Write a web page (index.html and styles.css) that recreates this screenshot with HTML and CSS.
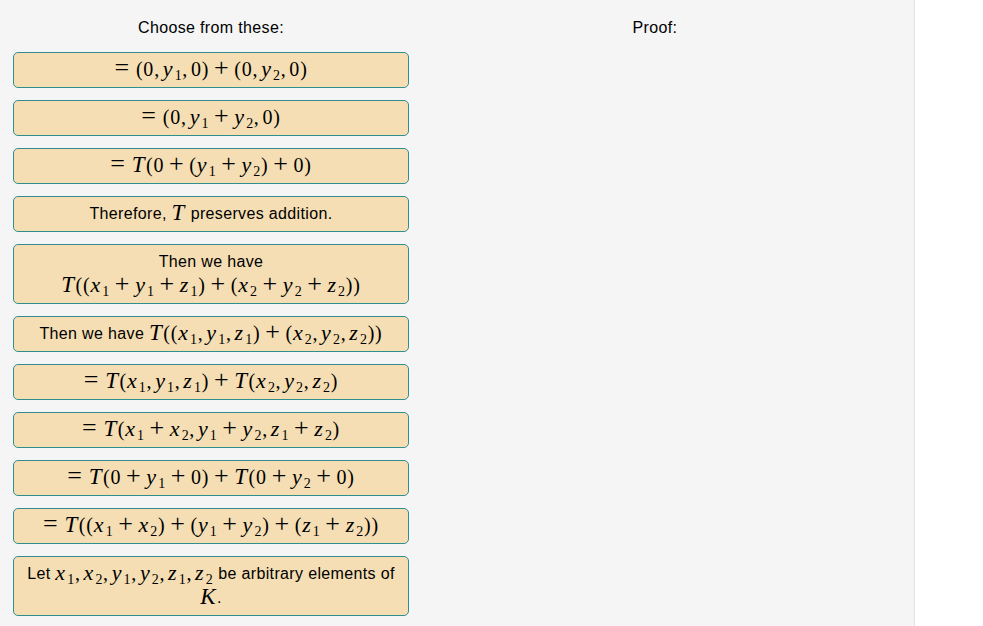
FILE: index.html
```html
<!DOCTYPE html>
<html lang="en">
<head>
    <meta charset="UTF-8">
    <meta name="viewport" content="width=device-width, initial-scale=1.0">
    <title>Proof builder</title>
    <link rel="stylesheet" href="styles.css">
</head>
<body>
    <div class="workspace">
        <!-- Choices -->
        <div class="column">
            <div class="heading">Choose from these:</div>
            <div class="card"><span class="m"><span class="rel">=</span>(0<span class="p">,</span><i>y</i><sub>1</sub><span class="p">,</span>0)<span class="op">+</span>(0<span class="p">,</span><i>y</i><sub>2</sub><span class="p">,</span>0)</span></div>
            <div class="card"><span class="m"><span class="rel">=</span>(0<span class="p">,</span><i>y</i><sub>1</sub><span class="op">+</span><i>y</i><sub>2</sub><span class="p">,</span>0)</span></div>
            <div class="card"><span class="m"><span class="rel">=</span><i class="cap">T</i>(0<span class="op">+</span>(<i>y</i><sub>1</sub><span class="op">+</span><i>y</i><sub>2</sub>)<span class="op">+</span>0)</span></div>
            <div class="card">Therefore, <span class="m"><i class="cap">T</i></span> preserves addition.</div>
            <div class="card">Then we have<br><span class="m"><i class="cap">T</i>((<i>x</i><sub>1</sub><span class="op">+</span><i>y</i><sub>1</sub><span class="op">+</span><i>z</i><sub>1</sub>)<span class="op">+</span>(<i>x</i><sub>2</sub><span class="op">+</span><i>y</i><sub>2</sub><span class="op">+</span><i>z</i><sub>2</sub>))</span></div>
            <div class="card">Then we have <span class="m"><i class="cap">T</i>((<i>x</i><sub>1</sub><span class="p">,</span><i>y</i><sub>1</sub><span class="p">,</span><i>z</i><sub>1</sub>)<span class="op">+</span>(<i>x</i><sub>2</sub><span class="p">,</span><i>y</i><sub>2</sub><span class="p">,</span><i>z</i><sub>2</sub>))</span></div>
            <div class="card"><span class="m"><span class="rel">=</span><i class="cap">T</i>(<i>x</i><sub>1</sub><span class="p">,</span><i>y</i><sub>1</sub><span class="p">,</span><i>z</i><sub>1</sub>)<span class="op">+</span><i class="cap">T</i>(<i>x</i><sub>2</sub><span class="p">,</span><i>y</i><sub>2</sub><span class="p">,</span><i>z</i><sub>2</sub>)</span></div>
            <div class="card"><span class="m"><span class="rel">=</span><i class="cap">T</i>(<i>x</i><sub>1</sub><span class="op">+</span><i>x</i><sub>2</sub><span class="p">,</span><i>y</i><sub>1</sub><span class="op">+</span><i>y</i><sub>2</sub><span class="p">,</span><i>z</i><sub>1</sub><span class="op">+</span><i>z</i><sub>2</sub>)</span></div>
            <div class="card"><span class="m"><span class="rel">=</span><i class="cap">T</i>(0<span class="op">+</span><i>y</i><sub>1</sub><span class="op">+</span>0)<span class="op">+</span><i class="cap">T</i>(0<span class="op">+</span><i>y</i><sub>2</sub><span class="op">+</span>0)</span></div>
            <div class="card"><span class="m"><span class="rel">=</span><i class="cap">T</i>((<i>x</i><sub>1</sub><span class="op">+</span><i>x</i><sub>2</sub>)<span class="op">+</span>(<i>y</i><sub>1</sub><span class="op">+</span><i>y</i><sub>2</sub>)<span class="op">+</span>(<i>z</i><sub>1</sub><span class="op">+</span><i>z</i><sub>2</sub>))</span></div>
            <div class="card">Let <span class="m"><i>x</i><sub>1</sub><span class="p">,</span><i>x</i><sub>2</sub><span class="p">,</span><i>y</i><sub>1</sub><span class="p">,</span><i>y</i><sub>2</sub><span class="p">,</span><i>z</i><sub>1</sub><span class="p">,</span><i>z</i><sub>2</sub></span> be arbitrary elements of <span class="m"><i class="cap">K</i></span>.</div>
        </div>

        <!-- Answer area -->
        <div class="column">
            <div class="heading">Proof:</div>
        </div>
    </div>
</body>
</html>
```

FILE: styles.css
```css
/* Page */
body {
    margin: 0;
    background: #fff;
    color: #000;
    font-family: "Liberation Sans", Arial, sans-serif;
    font-size: 16px;
    letter-spacing: 0.35px;
}

.workspace {
    display: flex;
    gap: 48px;
    box-sizing: border-box;
    width: 915px;
    min-height: 626px;
    padding: 0 13px;
    background: #f5f5f5;
    border-right: 1px solid #e3e3e3;
}

.column {
    width: 396px;
}

.heading {
    height: 52px;
    line-height: 55px;
    text-align: center;
}

/* Choice cards */
.card {
    padding: 5px 12px;
    margin-bottom: 12px;
    line-height: 24px;
    text-align: center;
    background: wheat;
    border: 1px solid #2f8f8f;
    border-radius: 5px;
}

/* Math */
.m {
    font-family: "Liberation Serif", "Times New Roman", serif;
    font-size: 20px;
    line-height: 0;
    letter-spacing: 0.8px;
    vertical-align: -1px;
    white-space: nowrap;
}

.m i {
    font-size: 22px;
    letter-spacing: 2.1px;
}

.m i.cap {
    font-size: 23px;
    letter-spacing: 1.5px;
}

.m sub {
    font-size: 14px;
    line-height: 0;
    letter-spacing: 0.7px;
    vertical-align: -4px;
}

.op {
    margin: 0 4.8px;
    font-size: 26px;
    line-height: 0;
}

.rel {
    margin-right: 6px;
    font-size: 26px;
    line-height: 0;
}

.p {
    margin-right: 2.8px;
}
```
